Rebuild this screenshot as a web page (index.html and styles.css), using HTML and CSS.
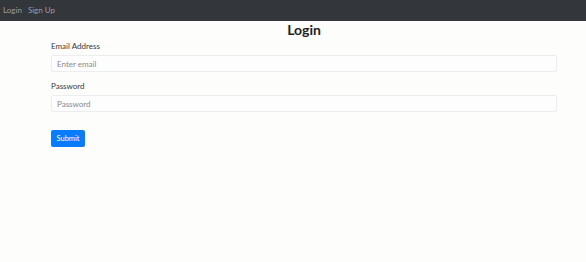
FILE: index.html
```html
<!DOCTYPE html>
<html>
<head>
<meta charset="utf-8">
<link rel="stylesheet" href="styles.css">
</head>
<body>
<nav class="navbar">
  <a class="nav-link" href="#">Login</a>
  <a class="nav-link" href="#">Sign Up</a>
</nav>
<main class="container">
  <h1 class="title">Login</h1>
  <form class="form">
    <div class="group">
      <label class="label">Email Address</label>
      <input class="input" type="email" placeholder="Enter email">
    </div>
    <div class="group">
      <label class="label">Password</label>
      <input class="input" type="password" placeholder="Password">
    </div>
    <button class="btn" type="button">Submit</button>
  </form>
</main>
</body>
</html>
```
FILE: styles.css
```css
html, body {
  margin: 0;
  padding: 0;
  background: #fdfdfb;
  font-family: "Lato", "Open Sans", sans-serif;
  color: #212529;
}
.navbar {
  height: 21px;
  background: #33363b;
  display: flex;
  align-items: center;
  gap: 6px;
  padding-left: 3px;
  box-sizing: border-box;
}
.nav-link {
  font-size: 8px;
  color: #9b9ea2;
  text-decoration: none;
  line-height: 10px;
  padding-bottom: 1px;
}
.container {
  padding: 0 29px 0 51px;
}
.title {
  margin: 0;
  text-align: center;
  font-size: 14px;
  font-weight: 700;
  line-height: 18px;
  color: #222;
}
.form {
  display: flex;
  flex-direction: column;
  margin-top: 2px;
}
.group {
  display: flex;
  flex-direction: column;
  gap: 4px;
  margin-bottom: 9px;
}
.label {
  font-size: 8px;
  line-height: 10px;
  color: #3a3a3a;
}
.input {
  height: 17px;
  box-sizing: border-box;
  border: 1px solid #ecedee;
  border-radius: 2px;
  background: #fdfdfd;
  padding: 0 5px;
  font-family: inherit;
  font-size: 8px;
  color: #495057;
  outline: none;
}
.input::placeholder {
  color: #868b90;
}
.btn {
  margin-top: 9px;
  align-self: flex-start;
  width: 34px;
  height: 17px;
  padding: 0;
  border: none;
  border-radius: 2px;
  background: #087cfb;
  color: #fff;
  font-family: inherit;
  font-size: 7.5px;
}
```
